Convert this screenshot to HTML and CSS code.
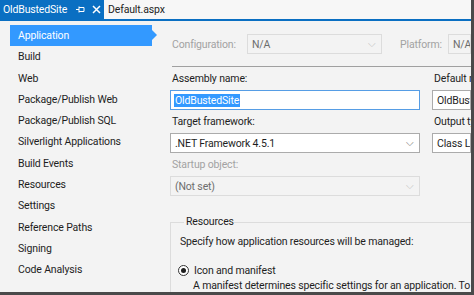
FILE: index.html
```html
<!DOCTYPE html>
<html>
<head>
<meta charset="utf-8">
<link rel="stylesheet" href="styles.css">
</head>
<body>
<div class="window">
  <div class="tabs">
    <div class="tab active">
      <span class="tab-title">OldBustedSite</span>
      <svg class="pin" width="9" height="9" viewBox="0 0 9 9"><path d="M0 4.5h3M3 1.5v6M3 2.5h5M3 6.5h5M8 2.5v4" stroke="#fff" stroke-width="1" fill="none"/></svg>
      <svg class="close" width="9" height="9" viewBox="0 0 9 9"><path d="M1 1L8 8M8 1L1 8" stroke="#fff" stroke-width="1.5"/></svg>
    </div>
    <div class="tab">Default.aspx</div>
  </div>
  <div class="tabline"></div>
  <div class="main">
    <ul class="nav">
      <li class="sel">Application</li>
      <li>Build</li>
      <li>Web</li>
      <li>Package/Publish Web</li>
      <li>Package/Publish SQL</li>
      <li>Silverlight Applications</li>
      <li>Build Events</li>
      <li>Resources</li>
      <li>Settings</li>
      <li>Reference Paths</li>
      <li>Signing</li>
      <li>Code Analysis</li>
    </ul>
    <div class="content">
      <div class="config-row">
        <span class="dim cfg-label">Configuration:</span>
        <div class="select disabled cfg"><span>N/A</span><span class="chev">&#x2335;</span></div>
        <span class="dim plat">Platform:</span>
        <div class="select disabled platsel"><span>N/A</span></div>
      </div>
      <div class="sep"></div>
      <div class="grid">
        <div class="col left">
          <label>Assembly name:</label>
          <div class="input focus"><span class="hl">OldBustedSite</span></div>
          <label>Target framework:</label>
          <div class="select"><span>.NET Framework 4.5.1</span><span class="chev">&#x2335;</span></div>
          <label class="dim">Startup object:</label>
          <div class="select disabled"><span>(Not set)</span><span class="chev">&#x2335;</span></div>
        </div>
        <div class="col right">
          <label>Default namespace:</label>
          <div class="input"><span>OldBustedSite</span></div>
          <label>Output type:</label>
          <div class="select"><span>Class Library</span></div>
        </div>
      </div>
      <fieldset class="group">
        <legend>Resources</legend>
        <p class="desc">Specify how application resources will be managed:</p>
        <div class="radio-row"><span class="radio"></span><span>Icon and manifest</span></div>
        <p class="note">A manifest determines specific settings for an application. To embed a custom manifest</p>
      </fieldset>
    </div>
  </div>
</div>
</body>
</html>
```

FILE: styles.css
```css
* { box-sizing: border-box; }
html, body { margin: 0; padding: 0; }
body {
  width: 474px;
  height: 295px;
  overflow: hidden;
  background: #4a4a4a;
  font-family: "Roboto", "Open Sans", sans-serif;
  font-size: 10.5px;
  letter-spacing: -0.15px;
  color: #1e1e1e;
}
.window {
  width: 471px;
  height: 292px;
  background: #f3f3f3;
  display: flex;
  flex-direction: column;
  overflow: hidden;
}
.tabs {
  height: 19px;
  display: flex;
  background: #f7f7f7;
  flex: none;
}
.tab {
  display: flex;
  align-items: center;
  padding: 0 4px;
  height: 19px;
  white-space: nowrap;
}
.tab.active {
  background: #0a6fc2;
  color: #fff;
  width: 104px;
  padding: 0 3px;
}
.tab-title { width: 73px; flex: none; }
.pin { margin-right: 7px; flex: none; }
.close { flex: none; }
.tabline { height: 2px; background: #0a6fc2; flex: none; }
.main { flex: 1; display: flex; min-height: 0; }
.nav {
  list-style: none;
  margin: 0;
  padding: 4px 0 0 10px;
  width: 160px;
  flex: none;
}
.nav li {
  height: 21.3px;
  line-height: 21.3px;
  padding-left: 8px;
  width: 142px;
  white-space: nowrap;
  position: relative;
}
.nav li.sel {
  background: #3399ff;
  color: #fff;
}
.nav li.sel::after {
  content: "";
  position: absolute;
  right: -5px;
  top: 5px;
  border-left: 5px solid #3399ff;
  border-top: 5.5px solid transparent;
  border-bottom: 5.5px solid transparent;
}
.content {
  flex: 1;
  padding: 13px 0 0 10px;
  min-width: 0;
  overflow: hidden;
}
.dim { color: #a2a2a2; }
.config-row {
  display: flex;
  align-items: center;
  padding-left: 2px;
  white-space: nowrap;
}
.cfg-label { width: 75px; flex: none; }
.select, .input {
  height: 20px;
  border: 1px solid #ababab;
  background: #fff;
  display: flex;
  align-items: center;
  justify-content: space-between;
  padding: 0 5px 0 4px;
  white-space: nowrap;
  overflow: hidden;
}
.select.disabled { background: #f3f3f3; border-color: #dcdcdc; }
.select.disabled span:first-child { color: #6d6d6d; }
.cfg { width: 135px; flex: none; }
.plat { width: 48px; margin-left: 18px; flex: none; }
.platsel { flex: 1; width: 30px; }
.chev { color: #777; font-size: 10px; }
.disabled .chev { color: #c4c4c4; }
.sep { height: 1px; background: #a0a0a0; margin: 12px 0 0 2px; }
.grid { display: flex; gap: 12px; margin-top: 0; }
.col { display: flex; flex-direction: column; }
.left { width: 250px; flex: none; }
.right { flex: 1; min-width: 0; }
label { display: block; height: 22px; line-height: 22px; padding-left: 2px; margin-top: 1px; white-space: nowrap; }
.input.focus { border-color: #569de5; }
.hl { background: #3399ff; color: #fff; margin-left: -1px; padding: 0 1px; }
.right .input, .right .select { justify-content: flex-start; }
.group {
  margin: 18px 0 0 0;
  border: none;
  border-top: 1px solid #dcdcdc;
  border-left: 1px solid #dcdcdc;
  padding: 0 0 0 9px;
  min-width: 0;
}
.group legend { padding: 0 0 0 2px; margin-left: 4px; line-height: 16px; }
.desc { margin: 4px 0 0 0; line-height: 16px; white-space: nowrap; }
.radio-row { display: flex; align-items: center; height: 16px; margin-top: 12px; white-space: nowrap; }
.radio {
  width: 11px; height: 11px; border-radius: 50%;
  border: 1px solid #333; background: #fff; position: relative; margin-right: 5px; margin-left: -2px;
}
.radio::after {
  content: ""; position: absolute; left: 2px; top: 2px; width: 5px; height: 5px; border-radius: 50%; background: #1e1e1e;
}
.note { margin: 0 0 0 13px; line-height: 16px; white-space: nowrap; }
```
